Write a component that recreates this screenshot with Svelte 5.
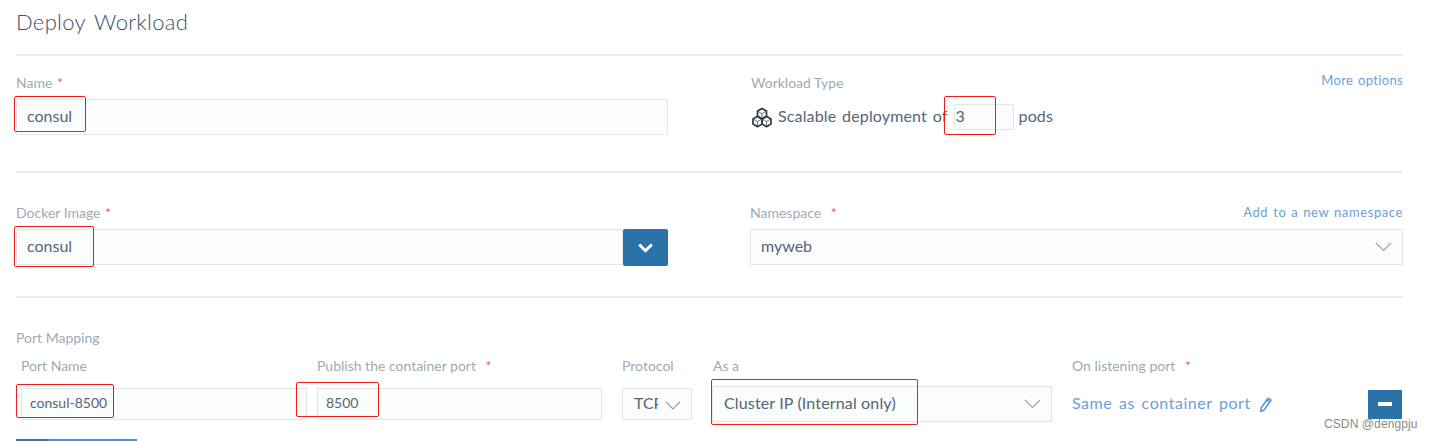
<script>
  // red boxes someone drew on top of the screenshot
  const marks = [
    { x: 14, y: 96, w: 72, h: 36 },
    { x: 944, y: 96, w: 52, h: 39 },
    { x: 14, y: 226, w: 80, h: 41 },
    { x: 16, y: 384, w: 98, h: 34 },
    { x: 296, y: 382, w: 83, h: 35 },
    { x: 711, y: 379, w: 207, h: 46 }
  ];
</script>

<div class="page">
  <h1>Deploy Workload</h1>
  <hr />

  <section class="two first">
    <div>
      <div class="label">Name <span class="req">*</span></div>
      <div class="input">consul</div>
    </div>
    <div class="right">
      <div class="label-row">
        <div class="label type">Workload Type</div>
        <a class="link up" href="#more">More options</a>
      </div>
      <div class="scale">
        <svg class="cubes" width="22" height="22" viewBox="0 0 22 22" fill="none" stroke="#2f3a46" stroke-width="1.7" stroke-linejoin="round">
          <path d="M11 1.500l4.500 2.600v5.200L11 11.900 6.500 9.300V4.100z" />
          <path d="M6.500 9.300l4.500 2.600v5.200l-4.500 2.600L2 17.100v-5.200z" />
          <path d="M15.500 9.300l4.500 2.600v5.200l-4.500 2.600-4.500-2.600v-5.200z" />
          <path d="M6.500 4.100L11 6.700l4.500-2.600M11 6.700v5.200M2 11.900l4.500 2.600 4.500-2.600M6.500 14.500v5.200M11 11.900l4.500 2.600 4.500-2.600M15.500 14.500v5.200" stroke-width="0.7" />
        </svg>
        <span class="scale-text">Scalable deployment of</span>
        <div class="pods">3</div>
        <span class="scale-text">pods</span>
      </div>
    </div>
  </section>
  <hr />

  <section class="two">
    <div>
      <div class="label">Docker Image <span class="req">*</span></div>
      <div class="image">
        <div class="input">consul</div>
        <button class="drop" aria-label="Choose image">
          <svg width="15" height="10" viewBox="0 0 15 10" fill="none" stroke="#fff" stroke-width="3"><path d="M1.200 1.500l6.300 6.200 6.300-6.200" /></svg>
        </button>
      </div>
    </div>
    <div class="right">
      <div class="label-row">
        <div class="label">Namespace <span class="req gap">*</span></div>
        <a class="link" href="#ns">Add to a new namespace</a>
      </div>
      <div class="input select">
        myweb
        <svg class="chev" width="17" height="10" viewBox="0 0 17 10" fill="none" stroke="#9aa3a8" stroke-width="1.2"><path d="M1 1l7.500 7.500L16 1" /></svg>
      </div>
    </div>
  </section>
  <hr />

  <section class="ports">
    <div class="label">Port Mapping</div>
    <div class="port-grid">
      <div class="label cell">Port Name</div>
      <div class="label cell">Publish the container port <span class="req gap">*</span></div>
      <div class="label cell">Protocol</div>
      <div class="label cell as">As a</div>
      <div class="label cell">On listening port <span class="req gap">*</span></div>
      <div></div>

      <div class="input small name">consul-8500</div>
      <div class="input small publish">8500</div>
      <div class="input small proto">
        <span class="clip">TCP</span>
        <svg class="chev" width="16" height="9" viewBox="0 0 16 9" fill="none" stroke="#9aa3a8" stroke-width="1.2"><path d="M1 1l7 7 7-7" /></svg>
      </div>
      <div class="input select kind">
        Cluster IP (Internal only)
        <svg class="chev" width="17" height="10" viewBox="0 0 17 10" fill="none" stroke="#9aa3a8" stroke-width="1.2"><path d="M1 1l7.500 7.500L16 1" /></svg>
      </div>
      <div class="same">
        <a class="link big" href="#same">Same as container port</a>
        <svg width="13" height="15" viewBox="0 0 13 15" fill="none" stroke="#5b93d8" stroke-width="1.6" stroke-linejoin="round"><path d="M9 1.300l3 1.900-6.800 9.700-3.400 1.400.4-3.400zM7.700 3.200l3 2" /></svg>
      </div>
      <button class="minus" aria-label="Remove port"><span></span></button>
    </div>
    <button class="add" aria-label="Add port"><span></span></button>
  </section>

  {#each marks as m}
    <div class="mark" style="left:{m.x}px;top:{m.y}px;width:{m.w}px;height:{m.h}px"></div>
  {/each}
  <div class="wm">CSDN @dengpju</div>
</div>

<style>
  :global(body) {
    background: #fff;
    overflow: hidden;
  }
  .page {
    position: relative;
    width: 1387px;
    height: 441px;
    overflow: hidden;
    padding-left: 16px;
    padding-right: 29px;
    font-family: Lato, "Open Sans", sans-serif;
    color: #55647a;
  }
  h1 {
    margin: 0;
    height: 54px;
    line-height: 43px;
    font-size: 22px;
    font-weight: 300;
    word-spacing: 3px;
    letter-spacing: 0.3px;
    color: #3f5064;
  }
  hr {
    margin: 0;
    border: 0;
    height: 2px;
    background: #e9eded;
  }
  section.two {
    display: grid;
    grid-template-columns: 652px 653px;
    column-gap: 82px;
    padding: 31px 0;
  }
  section.first {
    padding: 18px 0 36px;
  }
  .label {
    height: 18px;
    line-height: 18px;
    margin-bottom: 7px;
    font-size: 14px;
    color: #a0aab5;
  }
  .type {
    padding-left: 1px;
  }
  .req {
    color: #e8616c;
    margin-left: 1px;
  }
  .req.gap {
    margin-left: 6px;
  }
  .label-row {
    display: flex;
    justify-content: space-between;
  }
  .link {
    color: #6c9edc;
    font-size: 13px;
    letter-spacing: 0.6px;
    word-spacing: 1px;
    text-decoration: none;
  }
  .link.up {
    margin-top: -2px;
    letter-spacing: 0.35px;
  }
  .input {
    box-sizing: border-box;
    height: 36px;
    line-height: 32px;
    padding-left: 10px;
    border: 1px solid #e1e6e6;
    background: #fbfcfc;
    font-size: 16px;
  }
  .select {
    position: relative;
    display: block;
  }
  .chev {
    position: absolute;
    right: 10px;
    top: 12px;
  }
  .scale {
    display: flex;
    align-items: center;
    height: 26px;
    margin-top: 5px;
    font-size: 16px;
    letter-spacing: 0.15px;
    word-spacing: 1.500px;
  }
  .scale-text {
    margin-bottom: 3px;
  }
  .cubes {
    margin-left: 1px;
    margin-right: 5px;
    margin-top: 2px;
  }
  .pods {
    box-sizing: border-box;
    width: 60px;
    height: 26px;
    line-height: 22px;
    margin-left: 6px;
    margin-right: 5px;
    padding-left: 1px;
    border: 1px solid #e1e6e6;
    background: #fbfcfc;
  }
  .image {
    display: flex;
  }
  .image .input {
    flex: 1;
  }
  .drop {
    width: 45px;
    height: 37px;
    margin-bottom: -1px;
    padding: 0;
    border: 0;
    border-radius: 2px;
    background: #2a72a8;
    display: flex;
    align-items: center;
    justify-content: center;
  }
  .ports {
    padding-top: 31px;
  }
  .ports > .label {
    margin-bottom: 10px;
  }
  .port-grid {
    display: grid;
    grid-template-columns: 296px 305px 90px 360px 296px 34px;
    grid-template-rows: 18px 36px;
    row-gap: 11px;
    padding-left: 5px;
    align-items: center;
  }
  .cell {
    margin: 0;
  }
  .as {
    padding-left: 1px;
  }
  .small {
    height: 32px;
    line-height: 28px;
  }
  .name {
    width: 286px;
    padding-left: 8px;
    font-size: 14px;
  }
  .publish {
    width: 285px;
    padding-left: 8px;
    font-size: 14px;
  }
  .proto {
    position: relative;
    width: 70px;
    padding-left: 11px;
  }
  .clip {
    display: block;
    width: 24px;
    overflow: hidden;
  }
  .kind {
    width: 340px;
    padding-left: 11px;
    letter-spacing: 0.15px;
  }
  .same {
    display: flex;
    align-items: center;
    gap: 8px;
  }
  .big {
    font-size: 16px;
    letter-spacing: 0.55px;
    word-spacing: 2px;
    margin-bottom: 3px;
  }
  .minus {
    width: 34px;
    height: 29px;
    padding: 0;
    border: 0;
    border-radius: 1px;
    background: #2a72a8;
    display: flex;
    align-items: center;
    justify-content: center;
  }
  .minus span {
    width: 14px;
    height: 4px;
    background: #fff;
  }
  .add {
    display: block;
    width: 121px;
    height: 36px;
    margin-top: 17px;
    padding: 0;
    border: 0;
    background: #4a8fd0;
  }
  .add span {
    display: block;
    width: 32px;
    height: 100%;
    background: #4a74a0;
  }
  .mark {
    position: absolute;
    box-sizing: border-box;
    border: 1px solid #f01c1c;
    border-radius: 2px;
  }
  .wm {
    position: absolute;
    left: 1324px;
    top: 417px;
    font-family: "Liberation Sans", Arial, sans-serif;
    font-size: 12px;
    line-height: 15px;
    letter-spacing: 0.1px;
    color: #8a8a8a;
  }
</style>
